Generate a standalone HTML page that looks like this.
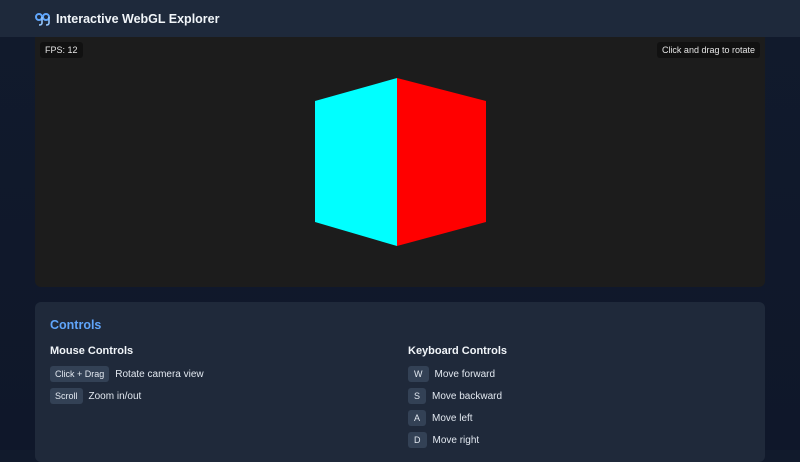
<!DOCTYPE html>
<html><head><meta charset="utf-8"><style>
*{box-sizing:border-box;margin:0;padding:0}
body{width:800px;height:450px;overflow:hidden;background:linear-gradient(180deg,#111a2c,#0f172a);font-family:"Liberation Sans","DejaVu Sans",sans-serif;color:#e2e8f0;position:relative}
.hdr{position:absolute;left:0;top:0;width:800px;height:37px;background:#1e293b;display:flex;align-items:center;padding-left:35px}
.hdr h1{font-size:12.5px;font-weight:bold;color:#f1f5f9;margin-left:6px}
.cv{position:absolute;left:35px;top:37px;width:730px;height:250px;background:#1c1c1c;border-radius:0 0 6px 6px;overflow:hidden}
.tag{position:absolute;top:5px;background:#111;color:#e5e5e5;font-size:9px;padding:3px 5px;border-radius:3px}
.panel{position:absolute;left:35px;top:302px;width:730px;height:160px;background:#1f293a;border-radius:6px;padding:16px 15px}
.panel h2{color:#60a5fa;font-size:12.5px;font-weight:bold}
.col{position:absolute;top:43px}
.col h3{font-size:11px;font-weight:bold;color:#f1f5f9;margin-bottom:6px}
.row{display:flex;align-items:center;height:22px;font-size:10px;color:#e2e8f0}
.k{background:#334155;color:#e2e8f0;font-size:9px;padding:3px 5px;border-radius:3px;margin-right:6px}
.k1{padding:3px 6px}
</style></head><body>
<div class="hdr"><svg width="15" height="14" viewBox="0 0 15 14"><circle cx="4" cy="5" r="3" fill="none" stroke="#60a5fa" stroke-width="2"/><circle cx="11" cy="5" r="3" fill="none" stroke="#60a5fa" stroke-width="2"/><path d="M7 5v6q0 2-3 2M14 5v6q0 2-3 2" fill="none" stroke="#93c5fd" stroke-width="1.6"/></svg><h1>Interactive WebGL Explorer</h1></div>
<div class="cv">
<div class="tag" style="left:5px">FPS: 12</div>
<div class="tag" style="right:5px">Click and drag to rotate</div>
<svg width="730" height="250" style="position:absolute;left:0;top:0"><polygon points="280,64 362,41 362,209 280,185" fill="#00ffff"/><polygon points="362,41 451,64 451,185 362,209" fill="#ff0000"/></svg>
</div>
<div class="panel">
<h2>Controls</h2>
<div class="col" style="left:15px"><h3>Mouse Controls</h3>
<div class="row"><span class="k">Click + Drag</span>Rotate camera view</div>
<div class="row"><span class="k">Scroll</span>Zoom in/out</div></div>
<div class="col" style="left:373px"><h3>Keyboard Controls</h3>
<div class="row"><span class="k k1">W</span>Move forward</div>
<div class="row"><span class="k k1">S</span>Move backward</div>
<div class="row"><span class="k k1">A</span>Move left</div>
<div class="row"><span class="k k1">D</span>Move right</div></div>
</div>
</body></html>
